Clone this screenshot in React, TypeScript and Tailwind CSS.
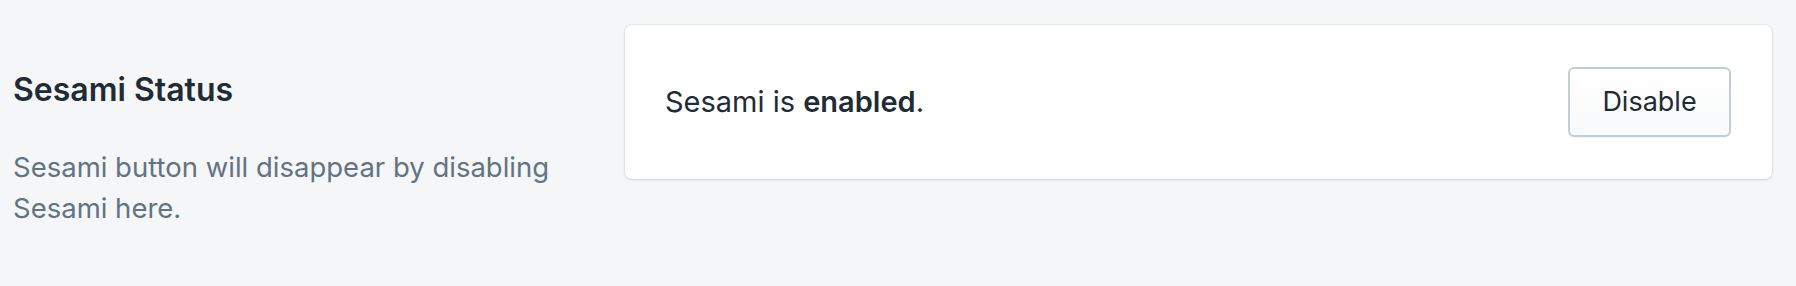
import React from "react";

const App = () => {
  return (
    <div
      className="w-[1796px] h-[286px] bg-[#f4f6f8] flex items-start pl-[13px] pr-[24px] pt-[25px]"
      style={{ fontFamily: "Inter, 'Noto Sans', sans-serif" }}
    >
      <div className="w-[612px] shrink-0 pt-[45px] pr-[50px]">
        <h2 className="text-[32px] leading-[40px] font-semibold text-[#212b36]">Sesami Status</h2>
        <p className="mt-[37px] text-[27.5px] leading-[41px] text-[#637381]">
          Sesami button will disappear by disabling Sesami here.
        </p>
      </div>
      <div className="flex-1 bg-white rounded-[7px] shadow-[0_0_0_1px_rgba(63,63,68,0.05),0_1px_3px_0_rgba(63,63,68,0.15)] pl-[40px] pr-[41px] flex items-center justify-between h-[154px]">
        <p className="text-[29px] text-[#212b36]">
          Sesami is <span className="font-semibold">enabled</span>.
        </p>
        <button className="w-[163px] h-[70px] rounded-[6px] border-2 border-[#c4cdd5] bg-gradient-to-b from-white to-[#f9fafb] text-[27px] text-[#212b36] shadow-[0_1px_0_0_rgba(22,29,37,0.05)]">
          Disable
        </button>
      </div>
    </div>
  );
};

export default App;
